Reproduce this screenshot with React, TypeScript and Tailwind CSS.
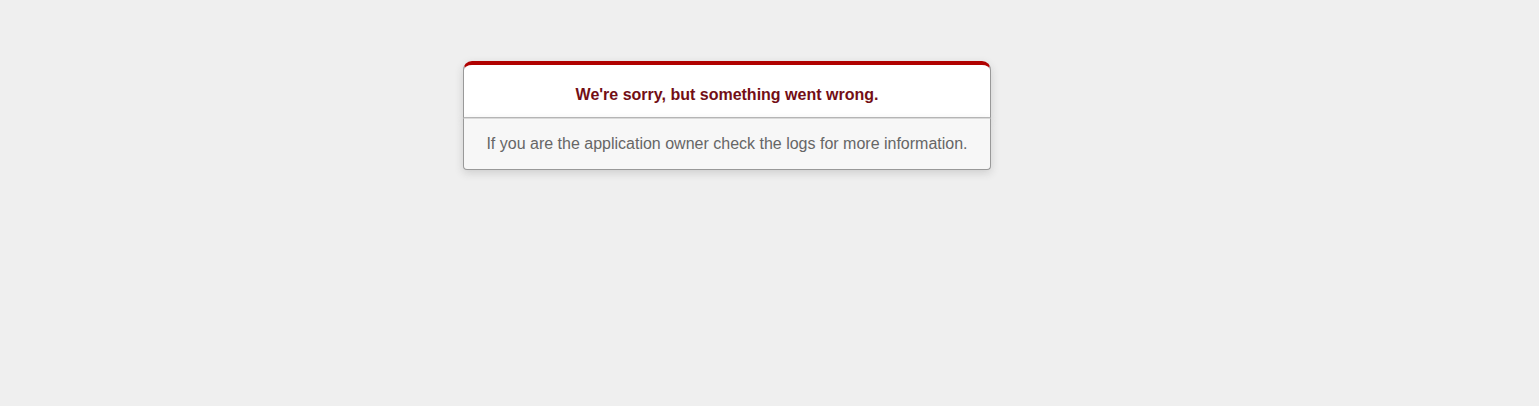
export default function App() {
  return (
    <div className="min-h-[406px] w-full bg-[#efefef] text-center text-[#2e2f30] font-['Liberation_Sans',Arial,sans-serif]">
      <div className="ml-[463px] w-[528px] pt-[61px]">
        <div className="rounded-t-[9px] border border-t-4 border-[#ccc] border-t-[#b00100] border-x-[#999] border-b-[#bbb] bg-white px-[12%] pt-[7px] shadow-[0_3px_8px_rgba(50,50,50,0.17)]">
          <h1 className="my-[10.72px] text-base font-bold leading-6 text-[#730e15]">
            We're sorry, but something went wrong.
          </h1>
        </div>
        <p className="m-0 rounded-b border border-[#999] border-t-[#dadada] bg-[#f7f7f7] p-4 text-base leading-[18px] text-[#666] shadow-[0_3px_8px_rgba(50,50,50,0.17)]">
          If you are the application owner check the logs for more information.
        </p>
      </div>
    </div>
  );
}
